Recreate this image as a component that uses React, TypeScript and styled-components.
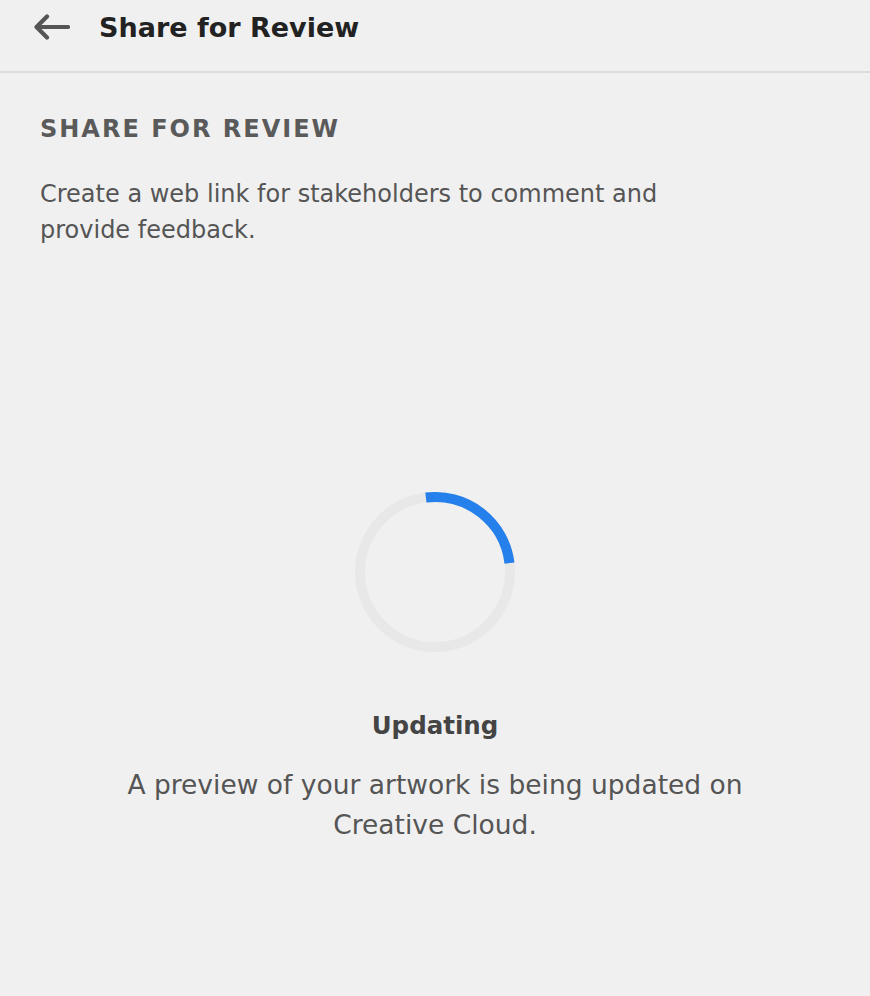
import styled, { createGlobalStyle } from 'styled-components';

const GlobalStyle = createGlobalStyle`
  html, body {
    margin: 0;
    padding: 0;
    background-color: #f0f0f0;
  }

  body {
    font-family: 'DejaVu Sans', 'Noto Sans', sans-serif;
    color: #505050;
  }
`;

const StyledPanel = styled.div`
  min-height: 996px;
  background-color: #f0f0f0;
  display: flex;
  flex-direction: column;
`;

const StyledHeader = styled.header`
  height: 73px;
  display: flex;
  align-items: center;
  gap: 29px;
  padding: 0 0 0 34px;
  border-bottom: 2px solid #dcdcdc;
  box-sizing: border-box;
`;

const BackButton = styled.button`
  display: flex;
  align-items: center;
  justify-content: center;
  width: 36px;
  height: 28px;
  padding: 0;
  margin-top: -18px;
  background: none;
  border: none;
  cursor: pointer;
`;

const HeaderTitle = styled.h1`
  margin: -17px 0 0 0;
  font-size: 27px;
  font-weight: 700;
  color: #222222;
`;

const StyledContent = styled.main`
  padding: 40px 40px 0 40px;
  display: flex;
  flex-direction: column;
`;

const SectionHeading = styled.h2`
  margin: 0;
  font-size: 24px;
  line-height: 32px;
  font-weight: 700;
  letter-spacing: 2px;
  color: #5a5a5a;
  text-transform: uppercase;
`;

const Description = styled.p`
  margin: 31px 0 0 0;
  font-size: 24px;
  line-height: 36px;
  color: #555555;
  max-width: 640px;
`;

const LoadingArea = styled.section`
  margin-top: 244px;
  display: flex;
  flex-direction: column;
  align-items: center;
  text-align: center;
`;

const LoadingTitle = styled.h3`
  margin: 58px 0 0 0;
  font-size: 24.5px;
  line-height: 32px;
  font-weight: 700;
  color: #444444;
`;

const LoadingMessage = styled.p`
  margin: 23px 0 0 0;
  font-size: 26.5px;
  line-height: 40px;
  color: #555555;
  max-width: 680px;
`;

function BackArrow() {
  return (
    <svg width="36" height="26" viewBox="0 0 36 26" fill="none">
      <path
        d="M34 13H3M13 2.5L2.5 13L13 23.5"
        stroke="#555555"
        strokeWidth="4.2"
        strokeLinecap="round"
        strokeLinejoin="round"
      />
    </svg>
  );
}

interface SpinnerProps {
  size: number;
  stroke: number;
  progress: number;
}

function Spinner({ size, stroke, progress }: SpinnerProps) {
  const r = (size - stroke) / 2;
  const circumference = 2 * Math.PI * r;
  const arc = circumference * progress;

  return (
    <svg width={size} height={size} viewBox={`0 0 ${size} ${size}`}>
      <circle
        cx={size / 2}
        cy={size / 2}
        r={r}
        fill="none"
        stroke="#e8e8e8"
        strokeWidth={stroke}
      />
      <circle
        cx={size / 2}
        cy={size / 2}
        r={r}
        fill="none"
        stroke="#2680eb"
        strokeWidth={stroke}
        strokeDasharray={`${arc} ${circumference}`}
        transform={`rotate(-97 ${size / 2} ${size / 2})`}
      />
    </svg>
  );
}

export default function App() {
  return (
    <>
      <GlobalStyle />
      <StyledPanel>
        <StyledHeader>
          <BackButton aria-label="Back">
            <BackArrow />
          </BackButton>
          <HeaderTitle>Share for Review</HeaderTitle>
        </StyledHeader>
        <StyledContent>
          <SectionHeading>Share for Review</SectionHeading>
          <Description>
            Create a web link for stakeholders to comment and provide feedback.
          </Description>
          <LoadingArea>
            <Spinner size={160} stroke={10} progress={0.25} />
            <LoadingTitle>Updating</LoadingTitle>
            <LoadingMessage>
              A preview of your artwork is being updated on Creative Cloud.
            </LoadingMessage>
          </LoadingArea>
        </StyledContent>
      </StyledPanel>
    </>
  );
}
